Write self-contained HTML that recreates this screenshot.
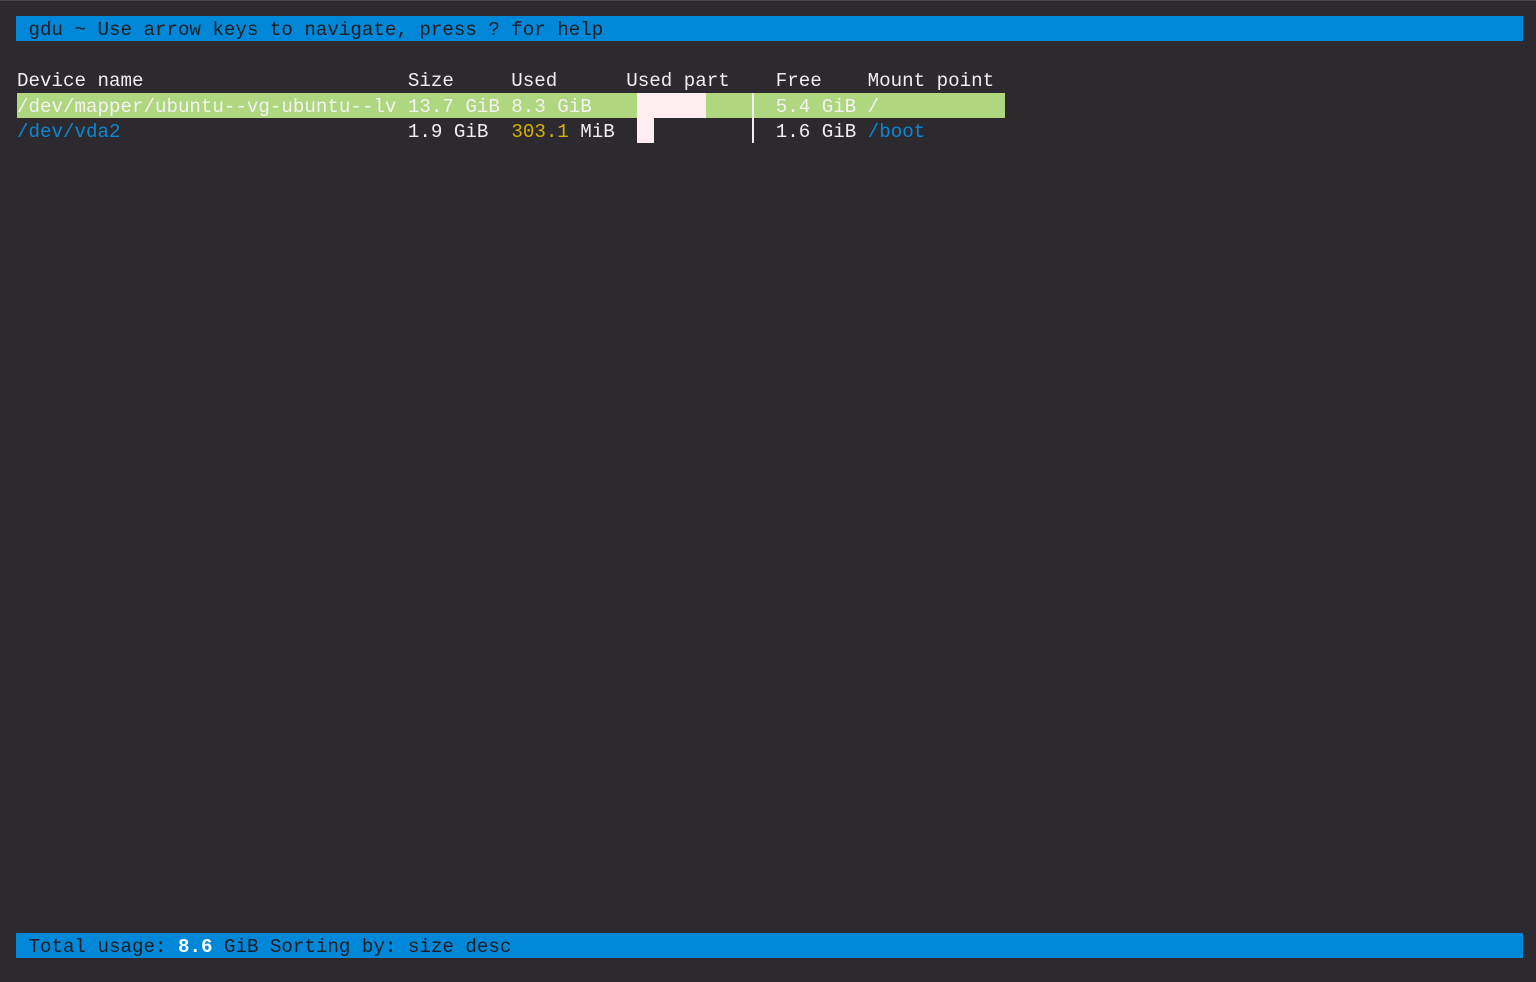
<!DOCTYPE html>
<html><head><style>
html,body{margin:0;padding:0;}
body{width:1536px;height:982px;background:#2c2a2e;overflow:hidden;position:relative;font-family:"Liberation Mono",monospace;font-size:19.17px;}
.r{position:absolute;left:17px;height:25.5px;line-height:25.5px;white-space:pre;color:#f2eeee;}
.bar{position:absolute;left:16px;width:1507px;height:25px;background:#0087d7;}
.b{position:absolute;background:#ffeef1;}
</style></head><body>
<div style="position:absolute;left:0;top:0;width:1536px;height:1px;background:#4a484c"></div>
<div class="bar" style="top:16px"></div>
<div class="r" style="top:18px;color:#1e1e22"> gdu ~ Use arrow keys to navigate, press ? for help</div>
<div class="r" style="top:69px">Device name                       Size     Used      Used part    Free    Mount point</div>
<div style="position:absolute;left:17px;top:93px;width:988px;height:25px;background:#afd780"></div>
<div class="b" style="left:637px;top:93px;width:69px;height:25px"></div>
<div class="b" style="left:637px;top:118px;width:17px;height:25px"></div>
<div style="position:absolute;left:752px;top:93px;width:2px;height:50px;background:#f2eeee"></div>
<div class="r" style="top:94.5px;color:#f4f2f2">/dev/mapper/ubuntu--vg-ubuntu--lv 13.7 GiB 8.3 GiB                5.4 GiB /</div>
<div class="r" style="top:120px"><span style="color:#0a87d7">/dev/vda2</span>                         1.9 GiB  <span style="color:#d7af00">303.1</span> MiB              1.6 GiB <span style="color:#0a87d7">/boot</span></div>
<div class="bar" style="top:933px"></div>
<div class="r" style="top:935px;color:#1e1e22"> Total usage: <b style="color:#fff">8.6</b> GiB Sorting by: size desc</div>
</body></html>
